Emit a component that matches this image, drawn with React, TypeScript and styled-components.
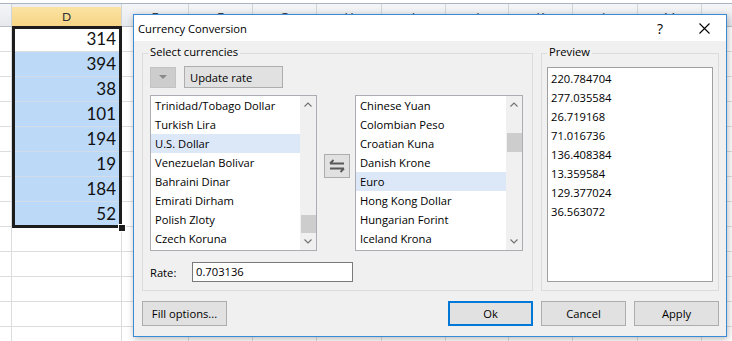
import React from "react";
import styled, { createGlobalStyle, css } from "styled-components";

const GlobalStyle = createGlobalStyle`
  html, body { margin: 0; padding: 0; background: #fff; }
  body { overflow: hidden; }
  #root { width: 732px; height: 341px; }
`;

const UI = `"Open Sans", "Noto Sans", sans-serif`;
const COLS = "12px 110px 67px 64px 64px 65px 64px 63px 64px 65px 64px 60px";
const LETTERS = ["", "D", "E", "F", "G", "H", "I", "J", "K", "L", "M", ""];

const Sheet = styled.div`
  position: relative;
  width: 732px;
  height: 341px;
  overflow: hidden;
  background: #fff;
`;

const TopStrip = styled.div`
  height: 3px;
  background: #fff;
  border-bottom: 1px solid #a9b3c1;
`;

const HeaderRow = styled.div`
  display: grid;
  grid-template-columns: ${COLS};
  height: 23px;
`;

const HeaderCell = styled.div<{ $active?: boolean }>`
  box-sizing: border-box;
  border-right: 1px solid #d0d5db;
  border-bottom: 1px solid #b9bec6;
  background: linear-gradient(#f4f5f7, #e6e9ed);
  display: flex;
  align-items: center;
  justify-content: center;
  padding-top: 3px;
  font: 12px Lato, sans-serif;
  color: #444;
  ${(p) =>
    p.$active &&
    css`
      background: linear-gradient(to bottom, #eceef1 0 3px, #fbe3a2 3px, #f6d586 100%);
      border-bottom-color: #e9b860;
      color: #333;
    `}
`;

const Grid = styled.div`
  display: grid;
  grid-template-columns: ${COLS};
  grid-auto-rows: 25px;
`;

const Cell = styled.div<{ $fill?: boolean }>`
  box-sizing: border-box;
  border-right: 1px solid #dadcdd;
  border-bottom: 1px solid #dadcdd;
  display: flex;
  align-items: flex-end;
  justify-content: flex-end;
  padding: 0 5px 2px 0;
  font: 17px Lato, sans-serif;
  color: #111;
  ${(p) =>
    p.$fill &&
    css`
      background: #bcd9f8;
      border-bottom-color: #d2dde9;
    `}
`;

const Selection = styled.div`
  position: absolute;
  left: 12px;
  top: 26px;
  width: 110px;
  height: 202px;
  box-sizing: border-box;
  border: 3px solid #1c1c1c;
  pointer-events: none;
`;

const FillHandle = styled.div`
  position: absolute;
  left: 118px;
  top: 224px;
  width: 6px;
  height: 6px;
  background: #1c1c1c;
  border: 1px solid #fff;
`;

/* ---------- Dialog ---------- */

const Dialog = styled.div`
  position: absolute;
  left: 133px;
  top: 14px;
  width: 594px;
  height: 323px;
  box-sizing: border-box;
  border: 1px solid #3b8ad6;
  background: #f0f0f0;
  box-shadow: 1px 2px 7px rgba(0, 0, 0, 0.28);
  display: flex;
  flex-direction: column;
  font-family: ${UI};
  font-size: 11.2px;
  color: #000;
`;

const TitleBar = styled.div`
  height: 26px;
  flex-shrink: 0;
  background: #fff;
  display: flex;
  align-items: center;
  padding-left: 4px;
`;

const Title = styled.div`
  flex: 1;
`;

const CaptionButton = styled.div`
  width: 44px;
  height: 26px;
  display: flex;
  align-items: center;
  justify-content: center;
  font-size: 14px;
`;

const Body = styled.div`
  flex: 1;
  display: flex;
  flex-direction: column;
  padding: 12px 7px 0 8px;
`;

const GroupsRow = styled.div`
  display: flex;
  gap: 8px;
  height: 238px;
`;

const Group = styled.div<{ $w: number; $pad: string }>`
  position: relative;
  box-sizing: border-box;
  width: ${(p) => p.$w}px;
  height: 238px;
  border: 1px solid #dcdcdc;
  padding: ${(p) => p.$pad};
  display: flex;
  flex-direction: column;
`;

const Legend = styled.div`
  position: absolute;
  top: -10px;
  left: 5px;
  padding: 0 2px;
  background: #f0f0f0;
  line-height: 16px;
`;

const ToolRow = styled.div`
  display: flex;
  align-items: center;
  gap: 8px;
  height: 22px;
`;

const DropButton = styled.div`
  box-sizing: border-box;
  width: 26px;
  height: 21px;
  background: #cdcdcd;
  border: 1px solid #c3c3c3;
  display: flex;
  align-items: center;
  justify-content: center;
`;

const PushButton = styled.button<{ $w: number; $h: number; $primary?: boolean; $left?: boolean }>`
  box-sizing: border-box;
  width: ${(p) => p.$w}px;
  height: ${(p) => p.$h}px;
  margin: 0;
  padding: ${(p) => (p.$left ? "0 0 0 5px" : "0")};
  text-align: ${(p) => (p.$left ? "left" : "center")};
  background: #e1e1e1;
  border: 1px solid #adadad;
  font-family: ${UI};
  font-size: 11.2px;
  color: #000;
  ${(p) =>
    p.$primary &&
    css`
      border: 2px solid #0078d7;
    `}
`;

const ListsRow = styled.div`
  display: flex;
  margin-top: 7px;
  height: 156px;
`;

const ListBox = styled.div<{ $w: number }>`
  box-sizing: border-box;
  width: ${(p) => p.$w}px;
  height: 156px;
  border: 1px solid #abadb3;
  background: #fff;
  display: flex;
`;

const Items = styled.div`
  flex: 1;
  display: flex;
  flex-direction: column;
`;

const Item = styled.div<{ $selected?: boolean }>`
  height: 19px;
  line-height: 19px;
  padding-left: 4px;
  white-space: nowrap;
  overflow: hidden;
  ${(p) =>
    p.$selected &&
    css`
      background: #dce7f8;
    `}
`;

const ScrollBar = styled.div`
  width: 16px;
  background: #f0f0f0;
  display: flex;
  flex-direction: column;
`;

const ScrollArrow = styled.div`
  height: 17px;
  display: flex;
  align-items: center;
  justify-content: center;
`;

const Track = styled.div`
  flex: 1;
  display: flex;
  flex-direction: column;
`;

const Thumb = styled.div<{ $h: number }>`
  height: ${(p) => p.$h}px;
  margin-left: 1px;
  background: #cdcdcd;
`;

const SwapColumn = styled.div`
  width: 38px;
  box-sizing: border-box;
  padding: 59px 0 0 7px;
`;

const SwapButton = styled.div`
  box-sizing: border-box;
  width: 26px;
  height: 24px;
  background: #e1e1e1;
  border: 1px solid #adadad;
  display: flex;
  align-items: center;
  justify-content: center;
`;

const RateRow = styled.div`
  display: flex;
  align-items: center;
  margin-top: 11px;
  height: 20px;
`;

const RateLabel = styled.div`
  width: 42px;
`;

const RateInput = styled.div`
  box-sizing: border-box;
  width: 161px;
  height: 20px;
  border: 1px solid #7a7a7a;
  background: #fff;
  padding-left: 3px;
  line-height: 18px;
`;

const PreviewBox = styled.div`
  box-sizing: border-box;
  width: 166px;
  height: 215px;
  border: 1px solid #a0a0a0;
  background: #fff;
  padding: 1px 0 0 3px;
`;

const PreviewLine = styled.div`
  height: 19px;
  line-height: 19px;
`;

const Footer = styled.div`
  display: flex;
  align-items: center;
  gap: 8px;
  margin-top: 10px;
  height: 25px;
`;

const Spacer = styled.div`
  flex: 1;
`;

const Chevron = ({ up }: { up?: boolean }) => (
  <svg width="8" height="5" viewBox="0 0 8 5">
    <polyline
      points={up ? "0.5,4.5 4,1 7.5,4.5" : "0.5,0.5 4,4 7.5,0.5"}
      fill="none"
      stroke="#707070"
      strokeWidth="1.1"
    />
  </svg>
);

const List = ({
  w,
  items,
  selected,
  thumbTop,
  thumbH,
}: {
  w: number;
  items: string[];
  selected: number;
  thumbTop: number;
  thumbH: number;
}) => (
  <ListBox $w={w}>
    <Items>
      {items.map((it, i) => (
        <Item key={it} $selected={i === selected}>
          {it}
        </Item>
      ))}
    </Items>
    <ScrollBar>
      <ScrollArrow>
        <Chevron up />
      </ScrollArrow>
      <Track>
        <div style={{ height: thumbTop }} />
        <Thumb $h={thumbH} />
      </Track>
      <ScrollArrow>
        <Chevron />
      </ScrollArrow>
    </ScrollBar>
  </ListBox>
);

const leftItems = [
  "Trinidad/Tobago Dollar",
  "Turkish Lira",
  "U.S. Dollar",
  "Venezuelan Bolivar",
  "Bahraini Dinar",
  "Emirati Dirham",
  "Polish Zloty",
  "Czech Koruna",
];
const rightItems = [
  "Chinese Yuan",
  "Colombian Peso",
  "Croatian Kuna",
  "Danish Krone",
  "Euro",
  "Hong Kong Dollar",
  "Hungarian Forint",
  "Iceland Krona",
];
const preview = [
  "220.784704",
  "277.035584",
  "26.719168",
  "71.016736",
  "136.408384",
  "13.359584",
  "129.377024",
  "36.563072",
];
const values = [314, 394, 38, 101, 194, 19, 184, 52];

export default function App() {
  const rows = Array.from({ length: 13 }, (_, r) => r);
  return (
    <>
      <GlobalStyle />
      <Sheet>
        <TopStrip />
        <HeaderRow>
          {LETTERS.map((l, i) => (
            <HeaderCell key={i} $active={i === 1}>
              {l}
            </HeaderCell>
          ))}
        </HeaderRow>
        <Grid>
          {rows.map((r) =>
            LETTERS.map((_, c) => (
              <Cell key={`${r}-${c}`} $fill={c === 1 && r > 0 && r < 8}>
                {c === 1 && r < 8 ? values[r] : ""}
              </Cell>
            ))
          )}
        </Grid>
        <Selection />
        <FillHandle />

        <Dialog>
          <TitleBar>
            <Title>Currency Conversion</Title>
            <CaptionButton>?</CaptionButton>
            <CaptionButton>
              <svg width="11" height="11" viewBox="0 0 11 11">
                <path d="M0.5 0.5 L10.5 10.5 M10.5 0.5 L0.5 10.5" stroke="#000" strokeWidth="1.1" />
              </svg>
            </CaptionButton>
          </TitleBar>
          <Body>
            <GroupsRow>
              <Group $w={391} $pad="12px 8px 8px 7px">
                <Legend>Select currencies</Legend>
                <ToolRow>
                  <DropButton>
                    <svg width="8" height="4" viewBox="0 0 8 4">
                      <polygon points="0,0 8,0 4,4" fill="#8a8a8a" />
                    </svg>
                  </DropButton>
                  <PushButton $w={99} $h={22} $left>
                    Update rate
                  </PushButton>
                </ToolRow>
                <ListsRow>
                  <List w={167} items={leftItems} selected={2} thumbTop={102} thumbH={18} />
                  <SwapColumn>
                    <SwapButton>
                      <svg width="16" height="14" viewBox="0 0 16 14">
                        <path
                          d="M1 4.5 H15 M1 4.5 L4.5 1 M1 9.5 H15 M15 9.5 L11.5 13"
                          fill="none"
                          stroke="#5a5a5a"
                          strokeWidth="1.8"
                        />
                      </svg>
                    </SwapButton>
                  </SwapColumn>
                  <List w={168} items={rightItems} selected={4} thumbTop={20} thumbH={19} />
                </ListsRow>
                <RateRow>
                  <RateLabel>Rate:</RateLabel>
                  <RateInput>0.703136</RateInput>
                </RateRow>
              </Group>
              <Group $w={178} $pad="13px 5px 8px 5px">
                <Legend>Preview</Legend>
                <PreviewBox>
                  {preview.map((p) => (
                    <PreviewLine key={p}>{p}</PreviewLine>
                  ))}
                </PreviewBox>
              </Group>
            </GroupsRow>
            <Footer>
              <PushButton $w={85} $h={25}>
                Fill options...
              </PushButton>
              <Spacer />
              <PushButton $w={85} $h={25} $primary>
                Ok
              </PushButton>
              <PushButton $w={85} $h={25}>
                Cancel
              </PushButton>
              <PushButton $w={85} $h={25}>
                Apply
              </PushButton>
            </Footer>
          </Body>
        </Dialog>
      </Sheet>
    </>
  );
}
